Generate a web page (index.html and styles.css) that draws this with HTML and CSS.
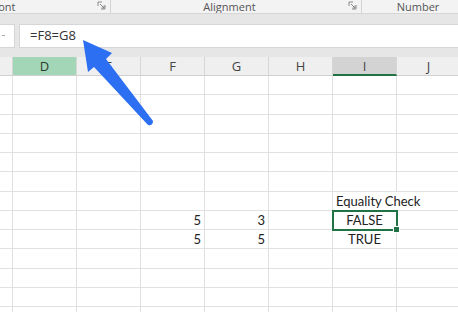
FILE: index.html
```html
<!DOCTYPE html>
<html lang="en">
<head>
  <meta charset="UTF-8">
  <title>Equality Check</title>
  <link rel="stylesheet" href="styles.css">
</head>
<body>
  <div class="ribbon">
    <div class="grp grp-font">
      <span class="grp-label">Font</span>
      <svg class="launch" width="9" height="9" viewBox="0 0 9 9"><path d="M1 5V1h4M8 4v4H4M3 3l4 4M7 4.5V7H4.5" fill="none" stroke="#8a8a8a" stroke-width="1"/></svg>
    </div>
    <div class="grp grp-align">
      <span class="grp-label">Alignment</span>
      <svg class="launch" width="9" height="9" viewBox="0 0 9 9"><path d="M1 5V1h4M8 4v4H4M3 3l4 4M7 4.5V7H4.5" fill="none" stroke="#8a8a8a" stroke-width="1"/></svg>
    </div>
    <div class="grp grp-num">
      <span class="grp-label">Number</span>
    </div>
  </div>

  <div class="fbar">
    <div class="namebox"><span class="nb-arrow"></span></div>
    <div class="formula">=F8=G8</div>
  </div>

  <div class="sheet">
    <!-- column headers -->
    <div class="h"></div>
    <div class="h h-hi">D</div>
    <div class="h">E</div>
    <div class="h">F</div>
    <div class="h">G</div>
    <div class="h">H</div>
    <div class="h h-sel">I</div>
    <div class="h">J</div>
    <!-- row 1 -->
    <div class="c"></div><div class="c"></div><div class="c"></div><div class="c"></div><div class="c"></div><div class="c"></div><div class="c"></div><div class="c"></div>
    <!-- row 2 -->
    <div class="c"></div><div class="c"></div><div class="c"></div><div class="c"></div><div class="c"></div><div class="c"></div><div class="c"></div><div class="c"></div>
    <!-- row 3 -->
    <div class="c"></div><div class="c"></div><div class="c"></div><div class="c"></div><div class="c"></div><div class="c"></div><div class="c"></div><div class="c"></div>
    <!-- row 4 -->
    <div class="c"></div><div class="c"></div><div class="c"></div><div class="c"></div><div class="c"></div><div class="c"></div><div class="c"></div><div class="c"></div>
    <!-- row 5 -->
    <div class="c"></div><div class="c"></div><div class="c"></div><div class="c"></div><div class="c"></div><div class="c"></div><div class="c"></div><div class="c"></div>
    <!-- row 6 -->
    <div class="c"></div><div class="c"></div><div class="c"></div><div class="c"></div><div class="c"></div><div class="c"></div><div class="c"></div><div class="c"></div>
    <!-- row 7 -->
    <div class="c"></div><div class="c"></div><div class="c"></div><div class="c"></div><div class="c"></div><div class="c"></div><div class="c ovf">Equality Check</div><div class="c"></div>
    <!-- row 8 -->
    <div class="c"></div><div class="c"></div><div class="c"></div><div class="c num">5</div><div class="c num">3</div><div class="c"></div><div class="c mid sel">FALSE</div><div class="c"></div>
    <!-- row 9 -->
    <div class="c"></div><div class="c"></div><div class="c"></div><div class="c num">5</div><div class="c num">5</div><div class="c"></div><div class="c mid">TRUE</div><div class="c"></div>
    <!-- row 10 -->
    <div class="c"></div><div class="c"></div><div class="c"></div><div class="c"></div><div class="c"></div><div class="c"></div><div class="c"></div><div class="c"></div>
    <!-- row 11 -->
    <div class="c"></div><div class="c"></div><div class="c"></div><div class="c"></div><div class="c"></div><div class="c"></div><div class="c"></div><div class="c"></div>
    <!-- row 12 -->
    <div class="c"></div><div class="c"></div><div class="c"></div><div class="c"></div><div class="c"></div><div class="c"></div><div class="c"></div><div class="c"></div>
    <!-- row 13 -->
    <div class="c"></div><div class="c"></div><div class="c"></div><div class="c"></div><div class="c"></div><div class="c"></div><div class="c"></div><div class="c"></div>
  </div>

  <!-- callout arrow pointing at the formula -->
  <svg class="pointer" width="458" height="312" viewBox="0 0 458 312">
    <path d="M83 40L112 53L106 59L153 121Q153 126 148 125L94 67L88 72Z" fill="#2c6ff2"/>
  </svg>
</body>
</html>
```

FILE: styles.css
```css
* {
  box-sizing: border-box;
}
html, body {
  margin: 0;
  width: 458px;
  height: 312px;
  overflow: hidden;
}
body {
  position: relative;
  background: #fff;
  font-family: "Open Sans", "Noto Sans", Arial, sans-serif;
}

/* ribbon bottom strip */
.ribbon {
  display: flex;
  height: 14px;
  background: #f3f3f3;
  border-bottom: 1px solid #d6d6d6;
  overflow: hidden;
}
.grp {
  display: flex;
  align-items: center;
  flex: none;
  height: 13px;
  border-right: 1px solid #d4d4d4;
}
.grp-font {
  margin-left: -89px;
  width: 200px;
}
.grp-align {
  width: 251px;
}
.grp-num {
  width: 126px;
  padding-right: 14px;
  border-right: none;
}
.grp-label {
  flex: 1;
  text-align: center;
  font-size: 11px;
  line-height: 13px;
  color: #555;
}
.launch {
  margin: 0 4px 3px 0;
}

/* formula bar */
.fbar {
  display: flex;
  align-items: center;
  gap: 4px;
  height: 43px;
  background: #e6e6e6;
}
.namebox {
  width: 15px;
  height: 24px;
  background: #fff;
  border: 1px solid #d6d6d6;
  border-left: none;
  display: flex;
  align-items: center;
}
.nb-arrow {
  width: 3px;
  height: 1px;
  margin-left: 2px;
  background: #aaa;
}
.formula {
  flex: 1;
  height: 24px;
  padding-left: 10px;
  background: #fff;
  border: 1px solid #d6d6d6;
  border-right: none;
  font-size: 13px;
  line-height: 21px;
  color: #333;
}

/* grid */
.sheet {
  display: grid;
  grid-template-columns: 13px repeat(7, 64px);
  grid-template-rows: 19px;
  grid-auto-rows: 19.25px;
}
.h {
  background: #efefef;
  border-right: 1px solid #d6d6d6;
  border-bottom: 1px solid #d0d0d0;
  text-align: center;
  font-size: 13px;
  line-height: 18px;
  color: #444;
}
.h-hi {
  background: #a3d6b6;
  color: #2b3a30;
}
.h-sel {
  background: #d3d3d3;
  border-bottom: 2px solid #217346;
}
.c {
  border-right: 1px solid #e1e1e1;
  border-bottom: 1px solid #e1e1e1;
  padding: 0 3px;
  white-space: nowrap;
  font-family: Lato, "Open Sans", sans-serif;
  font-size: 13px;
  line-height: 19px;
  color: #222;
}
.ovf {
  border-right-color: transparent;
  overflow: visible;
}
.num {
  text-align: right;
}
.mid {
  text-align: center;
}
.sel {
  position: relative;
  outline: 2px solid #217346;
  outline-offset: -1px;
}
.sel::after {
  content: "";
  position: absolute;
  right: -4px;
  bottom: -4px;
  width: 5px;
  height: 5px;
  background: #217346;
  border: 1px solid #fff;
}

.pointer {
  position: absolute;
  left: 0;
  top: 0;
  pointer-events: none;
}
```
